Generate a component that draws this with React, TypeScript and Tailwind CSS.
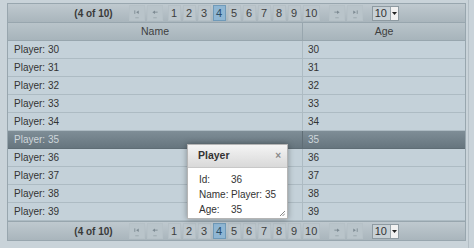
import React from "react";

const rows = [30, 31, 32, 33, 34, 35, 36, 37, 38, 39];

function NavIcon({ kind }: { kind: "first" | "prev" | "next" | "last" }) {
  const c = "#7d8a92";
  return (
    <svg width="16" height="16" viewBox="0 0 16 16">
      {kind === "first" && (
        <>
          <rect x="5" y="5" width="1" height="4" fill={c} />
          <path d="M10 5 L7 7 L10 9 Z" fill={c} />
        </>
      )}
      {kind === "prev" && (
        <>
          <path d="M8 5 L5 7 L8 9 Z" fill={c} />
          <rect x="8" y="6.5" width="3" height="1" fill={c} />
        </>
      )}
      {kind === "next" && (
        <>
          <rect x="5" y="6.5" width="3" height="1" fill={c} />
          <path d="M8 5 L11 7 L8 9 Z" fill={c} />
        </>
      )}
      {kind === "last" && (
        <>
          <path d="M6 5 L9 7 L6 9 Z" fill={c} />
          <rect x="10" y="5" width="1" height="4" fill={c} />
        </>
      )}
      <rect x="6" y="13" width="4" height="1" fill="#9aa6ad" />
    </svg>
  );
}

function NavBtn({ kind }: { kind: "first" | "prev" | "next" | "last" }) {
  return (
    <div className="w-[16px] h-[16px] border border-[#b6c1c7] bg-[#b9c4ca] flex items-center justify-center">
      <NavIcon kind={kind} />
    </div>
  );
}

function Paginator({ bottom }: { bottom?: boolean }) {
  const pages = [1, 2, 3, 4, 5, 6, 7, 8, 9, 10];
  return (
    <div
      className={`h-[19px] flex items-center justify-center bg-gradient-to-b from-[#bfc9cf] to-[#a9b5bc] ${
        bottom ? "border-t border-[#98a6ae]" : "border-b border-[#98a6ae]"
      }`}
    >
      <span className="font-bold text-[10px] text-[#3a3a3a] mr-[16px]">(4 of 10)</span>
      <div className="flex gap-[2px] mr-[5px]">
        <NavBtn kind="first" />
        <NavBtn kind="prev" />
      </div>
      <div className="flex gap-[2px]">
        {pages.map((p) => (
          <div
            key={p}
            className={`h-[16px] flex items-center justify-center text-[11px] ${
              p === 10 ? "w-[17px]" : "w-[13px]"
            } ${
              p === 4
                ? "bg-[#8fb6d3] border border-[#6f9ab9] text-[#2b4d66]"
                : "border border-[#b5c0c6] bg-[#bcc6cc] text-[#3d3d3d]"
            }`}
          >
            {p}
          </div>
        ))}
      </div>
      <div className="flex gap-[2px] ml-[9px]">
        <NavBtn kind="next" />
        <NavBtn kind="last" />
      </div>
      <div className="ml-[9px] w-[27px] h-[15px] border border-[#8e9aa1] bg-[#c7d0d5] flex items-center">
        <span className="flex-1 text-[11px] text-[#333] pl-[2px] leading-none">10</span>
        <div className="w-[8px] h-[13px] bg-[#f2f2f2] border-l border-[#9aa5ab] flex items-center justify-center">
          <svg width="5" height="3" viewBox="0 0 5 3">
            <path d="M0 0 L5 0 L2.5 3 Z" fill="#222" />
          </svg>
        </div>
      </div>
    </div>
  );
}

export default function App() {
  return (
    <div className="relative w-[474px] h-[248px] bg-[#c9d3d9] font-['Liberation_Sans',Arial,sans-serif] overflow-hidden">
      <div className="w-[469px] h-full border-r border-[#b3bec5] pl-[7px] pt-[3px]">
        <div className="w-[459px] border border-[#98a6ae]">
          <Paginator />
          <div className="grid grid-cols-[295px_1fr] h-[18px] bg-gradient-to-b from-[#b9c4ca] to-[#a7b4bb] border-b border-[#98a6ae] text-[10.5px] text-[#3e3e3e]">
            <div className="flex items-center justify-center border-r border-[#98a6ae]">Name</div>
            <div className="flex items-center justify-center">Age</div>
          </div>
          {rows.map((r) => {
            const sel = r === 35;
            return (
              <div
                key={r}
                className={`grid grid-cols-[295px_1fr] h-[18px] border-b text-[10px] ${
                  sel
                    ? "bg-gradient-to-b from-[#7f8e97] to-[#66757e] border-[#5f6d75] text-[#cfd7dc]"
                    : "bg-[#c4d1d9] border-[#adbbc3] text-[#333]"
                }`}
              >
                <div className={`flex items-center pl-[6px] border-r ${sel ? "border-[#5f6d75]" : "border-[#adbbc3]"}`}>
                  Player: {r}
                </div>
                <div className="flex items-center pl-[5px]">{r}</div>
              </div>
            );
          })}
          <Paginator bottom />
        </div>
      </div>

      <div className="absolute left-[187px] top-[144px] w-[101px] h-[75px] bg-white border border-[#b5b5b5] shadow-[0_0_6px_rgba(0,0,0,0.35)] flex flex-col">
        <div className="h-[23px] bg-gradient-to-b from-[#f4f4f4] to-[#d9d9d9] border-b border-[#c8c8c8] flex items-center px-[10px] relative">
          <span className="font-bold text-[10.5px] text-[#333]">Player</span>
          <span className="absolute right-[6px] top-[3px] text-[10px] text-[#8a8a8a] font-bold">×</span>
        </div>
        <div className="flex-1 pl-[11px] pt-[4px] text-[10px] text-[#333] leading-[15px] relative">
          <div className="flex"><span className="w-[32px]">Id:</span><span>36</span></div>
          <div className="flex"><span className="w-[32px]">Name:</span><span>Player: 35</span></div>
          <div className="flex"><span className="w-[32px]">Age:</span><span>35</span></div>
          <svg className="absolute right-[2px] bottom-[2px]" width="5" height="5" viewBox="0 0 5 5">
            <path d="M5 0 L0 5 M5 2.5 L2.5 5" stroke="#888" strokeWidth="1" />
          </svg>
        </div>
      </div>
    </div>
  );
}
